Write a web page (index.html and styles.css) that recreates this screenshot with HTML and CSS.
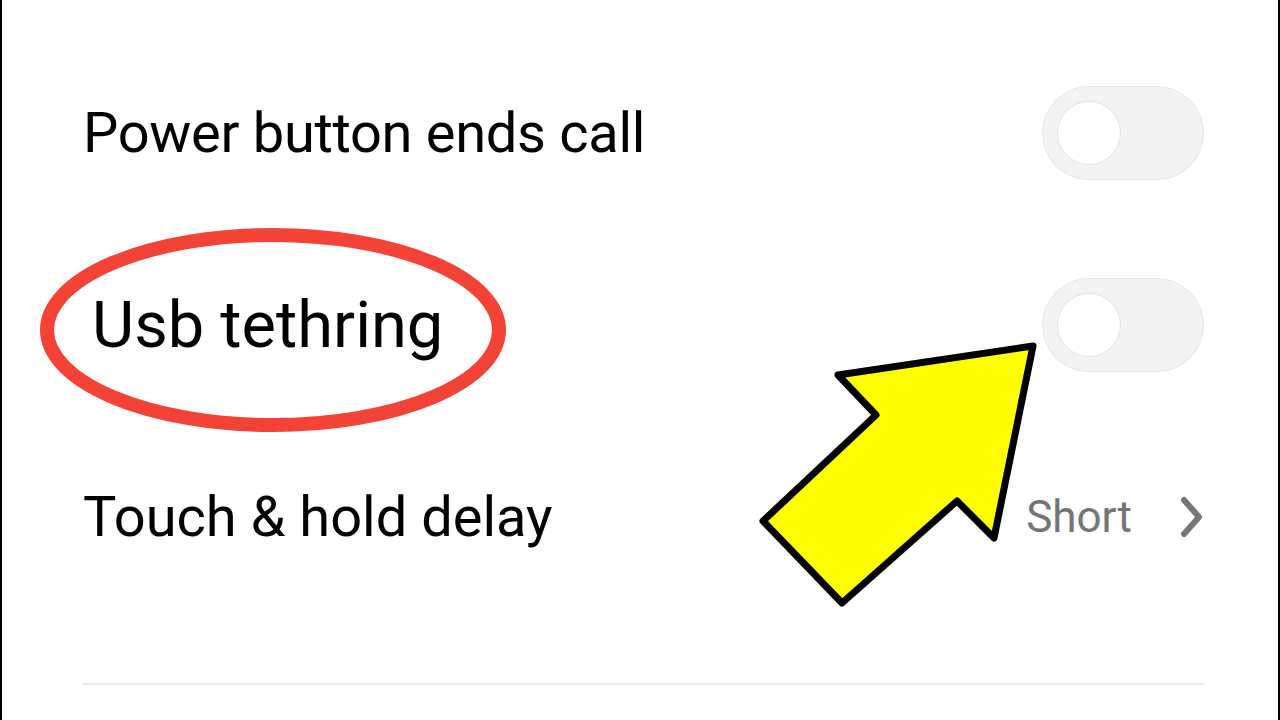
FILE: index.html
```html
<!DOCTYPE html>
<html>
<head>
<meta charset="utf-8">
<link rel="stylesheet" href="styles.css">
</head>
<body>
<div class="screen">
  <div class="list">
    <div class="row">
      <span class="label tight">Power button ends call</span>
      <span class="switch"><span class="knob"></span></span>
    </div>
    <div class="row">
      <span class="label big">Usb tethring</span>
      <span class="switch"><span class="knob"></span></span>
    </div>
    <div class="row">
      <span class="label">Touch &amp; hold delay</span>
      <span class="value">Short
        <svg class="chev" width="24" height="42" viewBox="0 0 24 42"><path d="M4 4 L19 21 L4 38" fill="none" stroke="#777" stroke-width="6" stroke-linecap="round" stroke-linejoin="round"/></svg>
      </span>
    </div>
    <div class="divider"></div>
  </div>
  <svg class="overlay" width="1280" height="720" viewBox="0 0 1280 720">
    <ellipse cx="273" cy="330" rx="226" ry="95" fill="none" stroke="#f44336" stroke-width="14"/>
    <polygon points="1033,346 838,375 876,415 763,521 842,603 957,501 994,538" fill="#ffff00" stroke="#000" stroke-width="7" stroke-linejoin="round"/>
  </svg>
</div>
</body>
</html>
```
FILE: styles.css
```css
html, body {
  margin: 0;
  padding: 0;
  background: #fff;
}
.screen {
  position: relative;
  width: 1280px;
  height: 720px;
  box-sizing: border-box;
  border-left: 2px solid #000;
  border-right: 2px solid #000;
  overflow: hidden;
  font-family: Roboto, "Liberation Sans", sans-serif;
}
.list {
  padding: 37px 74px 0 81px;
}
.row {
  height: 192px;
  display: flex;
  align-items: center;
  justify-content: space-between;
}
.label {
  font-size: 56px;
  color: #000;
}
.label.tight {
  letter-spacing: -0.3px;
}
.label.big {
  font-size: 65px;
  padding-left: 9px;
}
.switch {
  width: 162px;
  height: 94px;
  border-radius: 47px;
  background: #f3f3f3;
  border: 1px solid #e6e6e6;
  display: flex;
  align-items: center;
  padding-left: 14px;
  box-sizing: border-box;
}
.knob {
  width: 64px;
  height: 64px;
  border-radius: 50%;
  background: #fff;
  border: 1px solid #e4e4e4;
  box-sizing: border-box;
}
.value {
  display: flex;
  align-items: center;
  gap: 48px;
  font-size: 44px;
  color: #757575;
}
.chev {
  display: block;
}
.divider {
  margin-top: 70px;
  height: 2px;
  background: #ebebeb;
}
.overlay {
  position: absolute;
  left: -2px;
  top: 0;
  pointer-events: none;
}
```
